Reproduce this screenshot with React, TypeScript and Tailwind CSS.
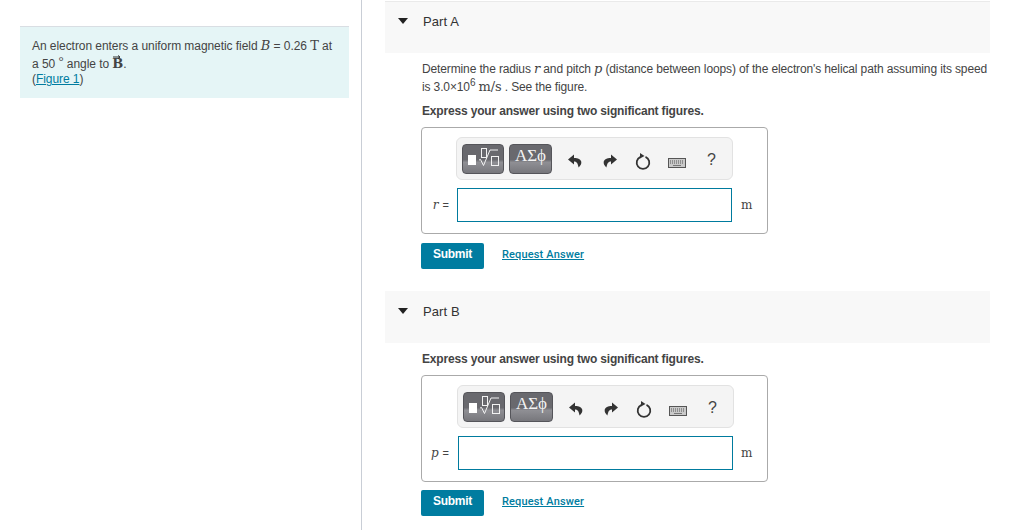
const sans = "font-['Liberation_Sans',Arial,sans-serif]";
const math = "font-['DejaVu_Serif','Liberation_Serif',serif]";
const gradient = "bg-[linear-gradient(#69696e_0,#69696e_52%,#8f8f94_62%,#77777c_100%)]";

function MathText({ children, italic }: { children: React.ReactNode; italic?: boolean }) {
  return <span className={`${math} text-[13px] ${italic ? "italic" : ""}`}>{children}</span>;
}

function PartHeader({ title, className }: { title: string; className: string }) {
  return (
    <div className={`flex h-[52px] w-[605px] items-start border-t bg-[#f8f8f8] pl-[13px] ${className}`}>
      <svg width="10" height="6" viewBox="0 0 10 6" className="mt-[16px] shrink-0">
        <path d="M0 0h10L5 6z" fill="#222" />
      </svg>
      <span className="mt-[11px] ml-[15px] text-[13px] leading-[18px] tracking-[0.1px] text-[#333]">{title}</span>
    </div>
  );
}

function TemplateButtons() {
  return (
    <div className="flex gap-[5px]">
      <div className={`relative h-[30px] w-[42px] overflow-hidden rounded-[4px] border border-[#55555a] ${gradient}`}>
        <div className="absolute top-[10px] left-[5px] h-[10px] w-[8px] bg-white" />
        <svg width="40" height="28" viewBox="0 0 40 28" className="absolute top-0 left-0" fill="none" stroke="#f2f2f2" strokeWidth="1">
          <rect x="18.500" y="3.500" width="5" height="9" />
          <path d="M16 15l1.500-.5 3 6 6.500-15.500h8" />
          <rect x="28.500" y="11.500" width="7" height="9" />
        </svg>
      </div>
      <div className={`flex h-[30px] w-[43px] items-start justify-center rounded-[4px] border border-[#55555a] ${gradient} pt-[1px] font-['Liberation_Serif',serif] text-[17px] leading-[20px] text-[#f4f4f4]`}>
        ΑΣϕ
      </div>
    </div>
  );
}

function ToolIcons() {
  return (
    <div className="mt-[5px] flex items-center">
      {/* undo */}
      <svg width="14" height="14" viewBox="0 0 14 14" className="ml-[16px]" fill="#333">
        <path d="M6 0.500L0 5.500 6 10.500V7.500c2.400 0 3.800 1.500 4.600 6 2-1.800 3-3.700 2.700-5.700C12.900 5 9.500 3.800 6 3.900z" />
      </svg>
      {/* redo */}
      <svg width="14" height="14" viewBox="0 0 14 14" className="ml-[21px]" fill="#333">
        <path d="M8 0.500l6 5-6 5V7.500c-2.400 0-3.800 1.500-4.600 6-2-1.800-3-3.700-2.700-5.700C1.100 5 4.500 3.800 8 3.900z" />
      </svg>
      {/* reset */}
      <svg width="16" height="17" viewBox="0 0 16 17" className="ml-[18px]" fill="none" stroke="#333" strokeWidth="1.800">
        <path d="M5.500 3.800a6.300 6.300 0 1 0 5 0" />
        <path d="M5 0l4.500 3L5 5.500z" fill="#333" stroke="none" />
      </svg>
      {/* keyboard */}
      <svg width="18" height="10" viewBox="0 0 18 10" className="mt-[3px] ml-[17px]">
        <rect x="0.500" y="0.500" width="17" height="9" fill="#c9c9c9" stroke="#555" />
        <path d="M2 3h14M2 5h14" stroke="#555" strokeWidth="1" strokeDasharray="1 1" />
        <path d="M5 7.500h8" stroke="#777" strokeWidth="1" />
      </svg>
      <span className="-mt-[2px] ml-[21px] text-[16px] leading-[16px] text-[#444]">?</span>
    </div>
  );
}

function Question({ label, toolbarShift, inputShift }: { label: string; toolbarShift: string; inputShift: string }) {
  return (
    <div className="relative h-[107px] w-[347px] rounded-[4px] border border-[#aaa] bg-white">
      <div className={`mt-[9px] flex h-[43px] w-[277px] items-center rounded-[6px] border border-[#e2e2e2] bg-[#f4f4f4] pl-[5px] ${toolbarShift}`}>
        <TemplateButtons />
        <ToolIcons />
      </div>
      <div className={`mt-[8px] h-[34px] w-[275px] border border-[#007b9e] bg-white ${inputShift}`} />
      <span className="absolute top-[70px] left-[9px] flex w-[18px] justify-end gap-[4px] text-[11px] leading-[14px] text-[#444]">
        <span className={`${math} text-[12px] italic`}>{label}</span>=
      </span>
      <span className={`${math} absolute top-[70px] left-[319px] text-[12px] leading-[14px] text-[#444]`}>m</span>
    </div>
  );
}

function SubmitRow() {
  return (
    <div className="flex items-center">
      <button className="h-[26px] w-[63px] rounded-[2px] bg-[#007ca0] pb-[4px] text-[12px] font-bold tracking-[-0.3px] text-white">Submit</button>
      <a className="ml-[18px] -mt-[2px] font-['Roboto',sans-serif] text-[11px] font-medium tracking-[0.15px] text-[#007ca0] underline">Request Answer</a>
    </div>
  );
}

export default function App() {
  return (
    <div className={`flex h-[530px] w-[1011px] overflow-hidden bg-white text-[12px] text-[#444] ${sans}`}>
      <div className="h-full w-[362px] shrink-0 border-r border-[#c9ced6] pt-[26px] pl-[20px]">
        <div className="h-[72px] w-[329px] border-t border-[#d9dee3] bg-[#e5f5f6] px-[12px] pt-[10px] leading-[17px] tracking-[-0.06px]">
          <p className="whitespace-nowrap">
            An electron enters a uniform magnetic field <MathText italic>B</MathText> = 0.26 <MathText>T</MathText> at
          </p>
          <p>
            a 50 <span className="relative -top-[3px] font-['Liberation_Serif',serif] text-[13px]">°</span> angle to{" "}
            <span className={`${math} relative inline-block text-[13px] font-bold`}>
              B
              <svg width="8" height="4" viewBox="0 0 8 4" className="absolute top-0 left-[1px]" fill="none" stroke="#333">
                <path d="M0 2h7M5 0.500l2 1.500-2 1.500" />
              </svg>
            </span>
            .
          </p>
          <p className="-mt-[2px]">
            (<a className="text-[#007ca0] underline">Figure 1</a>)
          </p>
        </div>
      </div>
      <div className="w-[605px] pt-px pl-[23px]">
        <PartHeader title="Part A" className="border-[#eaeaea]" />
        <div className="pl-[36px]">
          <div className="pl-px tracking-[-0.13px]">
            <p className="mt-[7px] whitespace-nowrap leading-[18px]">
              Determine the radius <MathText italic>r</MathText> and pitch <MathText italic>p</MathText> (distance between loops) of the electron's helical path assuming its speed
            </p>
            <p className="leading-[18px]">
              is 3.0×10<sup className="text-[10px]">6</sup> <MathText>m/s</MathText> . See the figure.
            </p>
          </div>
          <p className="mt-[6px] mb-[7px] pl-px leading-[18px] font-bold tracking-[-0.17px]">Express your answer using two significant figures.</p>
          <Question label="r" toolbarShift="ml-[34px]" inputShift="ml-[35px]" />
          <div className="mt-[9px]">
            <SubmitRow />
          </div>
        </div>
        <PartHeader title="Part B" className="mt-[22px] border-transparent" />
        <div className="pl-[36px]">
          <p className="mt-[7px] mb-[7px] pl-px leading-[18px] font-bold tracking-[-0.17px]">Express your answer using two significant figures.</p>
          <Question label="p" toolbarShift="ml-[35px]" inputShift="ml-[36px]" />
          <div className="mt-[8px]">
            <SubmitRow />
          </div>
        </div>
      </div>
    </div>
  );
}
